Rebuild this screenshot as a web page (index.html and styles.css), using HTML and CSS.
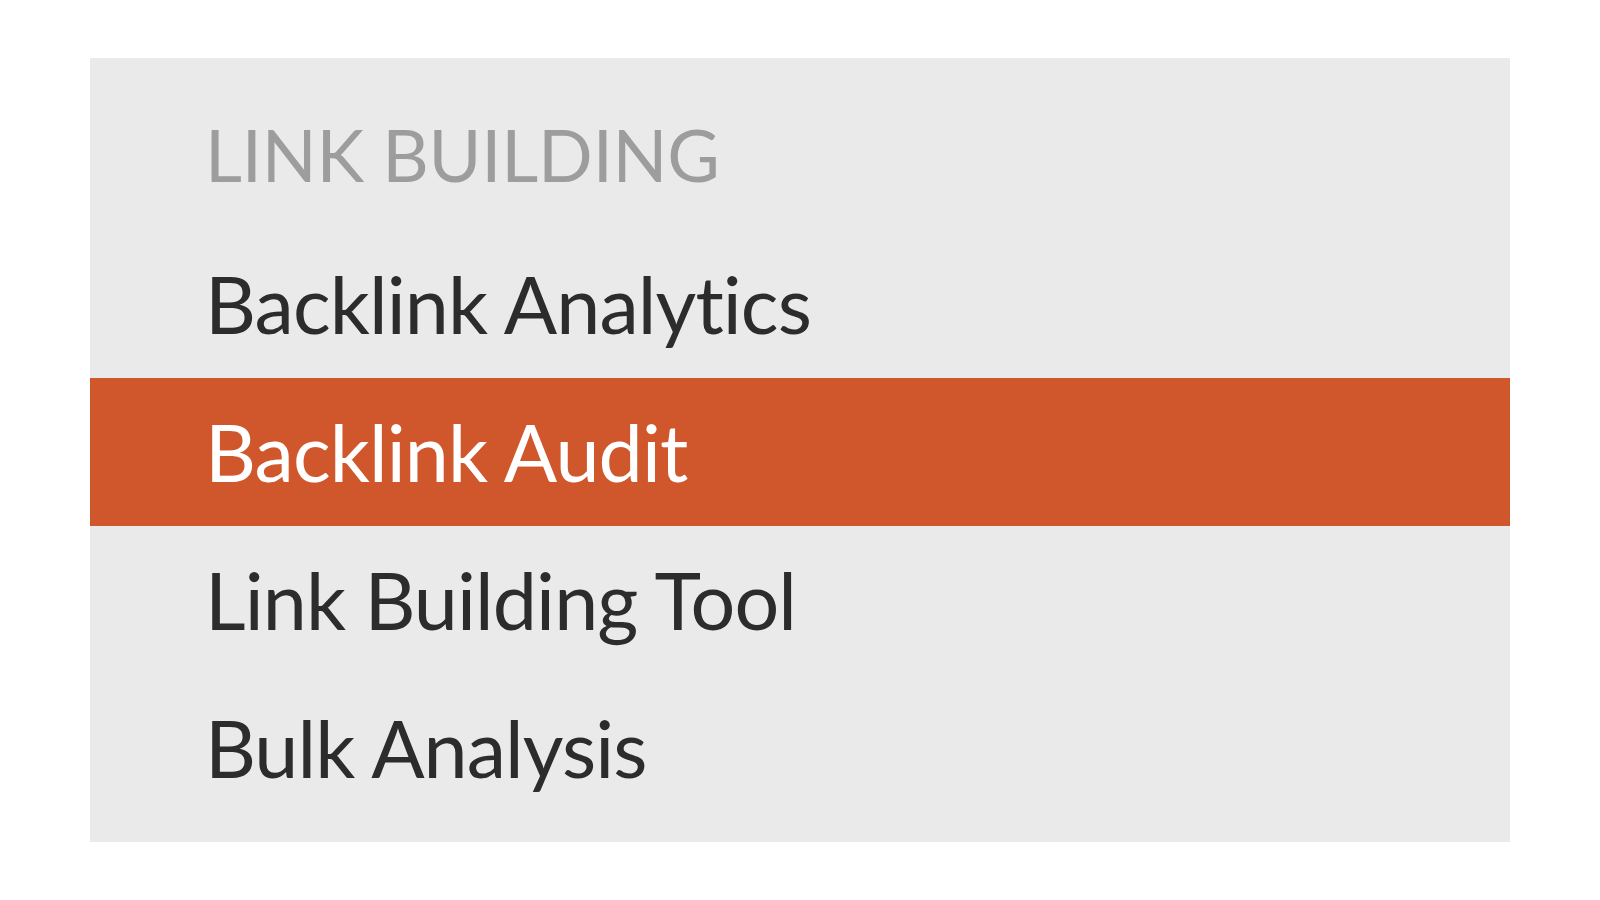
FILE: index.html
```html
<!DOCTYPE html>
<html lang="en">
<head>
  <meta charset="UTF-8" />
  <meta name="viewport" content="width=device-width, initial-scale=1.0"/>
  <title>Link Building</title>
  <link rel="stylesheet" href="styles.css">
</head>
<body>
  <nav class="side-menu">
    <h2 class="menu-title">LINK BUILDING</h2>
    <ul class="menu-list">
      <li><a href="#">Backlink Analytics</a></li>
      <li class="active"><a href="#">Backlink Audit</a></li>
      <li><a href="#">Link Building Tool</a></li>
      <li><a href="#">Bulk Analysis</a></li>
    </ul>
  </nav>
</body>
</html>
```

FILE: styles.css
```css
body { margin: 0; background: #fff; font-family: Lato, "Open Sans", sans-serif; }
.side-menu { margin: 58px 0 0 90px; width: 1420px; height: 784px; background: #eaeaea; }
.menu-title { margin: 0; padding: 20px 0 0 115px; height: 152px; line-height: 152px; font-size: 72px; font-weight: 400; color: #9d9d9d; letter-spacing: -0.2px; }
.menu-list { list-style: none; margin: 0; padding: 0; }
.menu-list li { height: 148px; line-height: 148px; }
.menu-list a { display: block; padding-left: 115px; font-size: 79px; color: #2c2c2c; text-decoration: none; letter-spacing: -0.9px; }
.menu-list li.active { background: #d0562b; }
.menu-list li.active a { color: #fff; }
```
